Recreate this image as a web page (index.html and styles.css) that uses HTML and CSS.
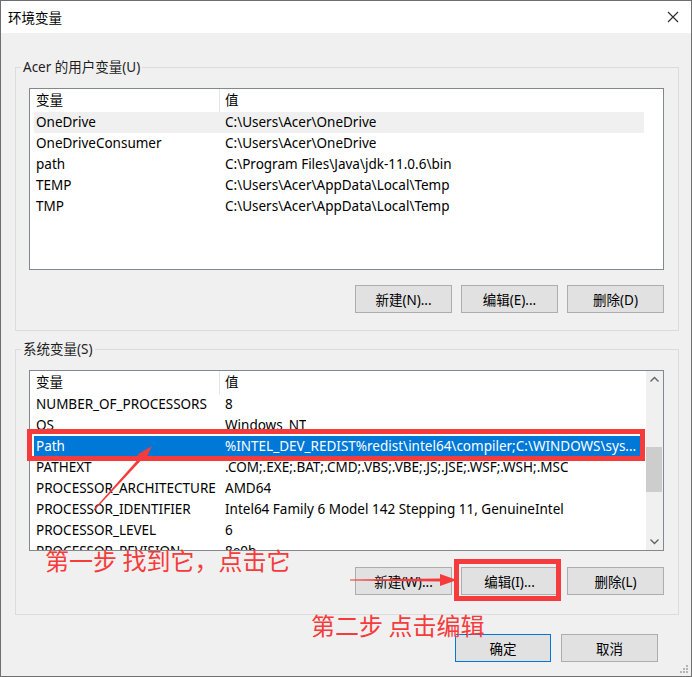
FILE: index.html
```html
<!DOCTYPE html>
<html>
<head>
    <title>环境变量</title>
    <link rel="stylesheet" href="styles.css">
</head>
<body>
    <div class="window">
        <div class="titlebar">
            <span class="title">环境变量</span>
            <svg class="close" width="12" height="12" viewBox="0 0 12 12">
                <path d="M1 1L11 11M11 1L1 11" stroke="#2b2b2b" stroke-width="1.1" fill="none"/>
            </svg>
        </div>

        <div class="dialog">
            <!-- User variables -->
            <fieldset class="group group-user">
                <legend>Acer 的用户变量(U)</legend>
                <div class="list list-user">
                    <div class="list-body">
                        <div class="list-header">
                            <span class="col-name">变量</span>
                            <span class="col-value">值</span>
                        </div>
                        <div class="row hover"><span class="cell-name">OneDrive</span><span class="cell-value">C:\Users\Acer\OneDrive</span></div>
                        <div class="row"><span class="cell-name">OneDriveConsumer</span><span class="cell-value">C:\Users\Acer\OneDrive</span></div>
                        <div class="row"><span class="cell-name">path</span><span class="cell-value">C:\Program Files\Java\jdk-11.0.6\bin</span></div>
                        <div class="row"><span class="cell-name">TEMP</span><span class="cell-value">C:\Users\Acer\AppData\Local\Temp</span></div>
                        <div class="row"><span class="cell-name">TMP</span><span class="cell-value">C:\Users\Acer\AppData\Local\Temp</span></div>
                    </div>
                </div>
                <div class="button-row">
                    <button class="btn">新建(N)...</button>
                    <button class="btn">编辑(E)...</button>
                    <button class="btn">删除(D)</button>
                </div>
            </fieldset>

            <!-- System variables -->
            <fieldset class="group group-system">
                <legend>系统变量(S)</legend>
                <div class="list list-system">
                    <div class="list-body">
                        <div class="list-header">
                            <span class="col-name">变量</span>
                            <span class="col-value">值</span>
                        </div>
                        <div class="row"><span class="cell-name">NUMBER_OF_PROCESSORS</span><span class="cell-value">8</span></div>
                        <div class="row"><span class="cell-name">OS</span><span class="cell-value">Windows_NT</span></div>
                        <div class="row selected"><span class="cell-name">Path</span><span class="cell-value">%INTEL_DEV_REDIST%redist\intel64\compiler;C:\WINDOWS\sys...</span></div>
                        <div class="row"><span class="cell-name">PATHEXT</span><span class="cell-value">.COM;.EXE;.BAT;.CMD;.VBS;.VBE;.JS;.JSE;.WSF;.WSH;.MSC</span></div>
                        <div class="row"><span class="cell-name">PROCESSOR_ARCHITECTURE</span><span class="cell-value">AMD64</span></div>
                        <div class="row"><span class="cell-name">PROCESSOR_IDENTIFIER</span><span class="cell-value">Intel64 Family 6 Model 142 Stepping 11, GenuineIntel</span></div>
                        <div class="row"><span class="cell-name">PROCESSOR_LEVEL</span><span class="cell-value">6</span></div>
                        <div class="row"><span class="cell-name">PROCESSOR_REVISION</span><span class="cell-value">8e0b</span></div>
                    </div>
                    <div class="scrollbar">
                        <svg class="scroll-arrow" width="17" height="17" viewBox="0 0 17 17">
                            <path d="M4.5 10.5L8.5 6.5L12.5 10.5" stroke="#606060" stroke-width="1.3" fill="none"/>
                        </svg>
                        <div class="scroll-track">
                            <div class="scroll-thumb"></div>
                        </div>
                        <svg class="scroll-arrow" width="17" height="17" viewBox="0 0 17 17">
                            <path d="M4.5 6.5L8.5 10.5L12.5 6.5" stroke="#606060" stroke-width="1.3" fill="none"/>
                        </svg>
                    </div>
                </div>
                <div class="button-row">
                    <button class="btn">新建(W)...</button>
                    <button class="btn">编辑(I)...</button>
                    <button class="btn">删除(L)</button>
                </div>
            </fieldset>

            <div class="dialog-buttons">
                <button class="btn btn-default">确定</button>
                <button class="btn">取消</button>
            </div>
        </div>

        <svg class="grip" width="10" height="10" viewBox="0 0 10 10">
            <rect x="7" y="1" width="2" height="2" fill="#b4b4b4"/>
            <rect x="4" y="4" width="2" height="2" fill="#b4b4b4"/>
            <rect x="7" y="4" width="2" height="2" fill="#b4b4b4"/>
            <rect x="1" y="7" width="2" height="2" fill="#b4b4b4"/>
            <rect x="4" y="7" width="2" height="2" fill="#b4b4b4"/>
            <rect x="7" y="7" width="2" height="2" fill="#b4b4b4"/>
        </svg>
    </div>

    <!-- Red annotations drawn over the dialog -->
    <svg class="annotations" width="692" height="677" viewBox="0 0 692 677">
        <rect x="29.5" y="431.5" width="613" height="27" fill="none" stroke="#f53b3b" stroke-width="5"/>
        <rect x="456.5" y="561.5" width="102" height="37" fill="none" stroke="#f53b3b" stroke-width="5"/>
        <polygon points="93.6,509.6 94.4,510.4 142.3,458.9 144.9,461.3 152,446 137.5,454.5 140.1,456.9" fill="#f53b3b"/>
        <polygon points="350,579.5 440,578.5 440,574 457,580 440,586 440,581.5 350,580.5" fill="#f53b3b"/>
    </svg>
    <span class="note note-one">第一步 找到它，点击它</span>
    <span class="note note-two">第二步 点击编辑</span>
</body>
</html>
```

FILE: styles.css
```css
body {
    margin: 0;
    padding: 0;
    width: 692px;
    height: 677px;
    position: relative;
    font-family: "Noto Sans", "Noto Sans CJK SC", sans-serif;
    font-size: 13.5px;
    color: #000;
    background: #f0f0f0;
}

.window {
    width: 692px;
    height: 677px;
    box-sizing: border-box;
    border: 1px solid #6f6f6f;
    background: #f0f0f0;
    position: relative;
    display: flex;
    flex-direction: column;
}

.titlebar {
    height: 32px;
    background: white;
    display: flex;
    align-items: center;
    justify-content: space-between;
    padding: 0 12px 0 7px;
}

.title {
    color: #000;
}

.dialog {
    flex: 1;
    display: flex;
    flex-direction: column;
}

.group {
    margin: 25px 12px 0 14px;
    padding: 12px 14px 17px 13px;
    border: 1px solid #dcdcdc;
    min-width: 0;
}

.group-system {
    margin-top: 9px;
    padding-bottom: 19px;
}

.group legend {
    padding: 0 2px;
    margin-left: -8px;
    line-height: 18px;
    color: #1e1e1e;
}

.list {
    border: 1px solid #828790;
    background: white;
    display: flex;
    overflow: hidden;
}

.list-user {
    height: 180px;
}

.list-system {
    height: 179px;
}

.list-body {
    flex: 1;
    min-width: 0;
}

.list-header {
    display: flex;
    height: 23px;
    width: 614px;
    line-height: 23px;
}

.col-name {
    width: 183px;
    padding-left: 6px;
    border-right: 1px solid #e5e5e5;
}

.col-value {
    padding-left: 5px;
}

.row {
    display: flex;
    height: 21px;
    line-height: 21px;
    width: 610px;
    margin-left: 4px;
    white-space: nowrap;
}

.row.hover {
    background: #f0f0f0;
}

.row.selected {
    background: #0078d7;
    color: white;
}

.cell-name {
    width: 189px;
    padding-left: 2px;
    flex-shrink: 0;
}

.cell-value {
    overflow: hidden;
}

.scrollbar {
    width: 17px;
    background: #f0f0f0;
    display: flex;
    flex-direction: column;
}

.scroll-arrow {
    display: block;
    flex-shrink: 0;
}

.scroll-track {
    flex: 1;
    padding-top: 59px;
}

.scroll-thumb {
    width: 16px;
    height: 45px;
    background: #cdcdcd;
}

.button-row {
    display: flex;
    justify-content: flex-end;
    gap: 9px;
    margin-top: 15px;
}

.group-system .button-row {
    margin-top: 16px;
}

.btn {
    width: 97px;
    height: 28px;
    padding: 0;
    background: #e1e1e1;
    border: 1px solid #adadad;
    font-family: inherit;
    font-size: 13.5px;
    color: #000;
}

.btn-default {
    width: 96px;
    border-color: #0078d7;
}

.dialog-buttons {
    display: flex;
    justify-content: flex-end;
    gap: 10px;
    margin: 19px 33px 0 0;
}

.grip {
    position: absolute;
    right: 2px;
    bottom: 2px;
}

.annotations {
    position: absolute;
    left: 0;
    top: 0;
    pointer-events: none;
}

.note {
    position: absolute;
    font-family: "Noto Sans CJK SC", sans-serif;
    font-size: 24px;
    line-height: 24px;
    color: #f53b3b;
    white-space: nowrap;
}

.note-one {
    left: 45px;
    top: 548px;
}

.note-two {
    left: 311px;
    top: 613px;
}
```
